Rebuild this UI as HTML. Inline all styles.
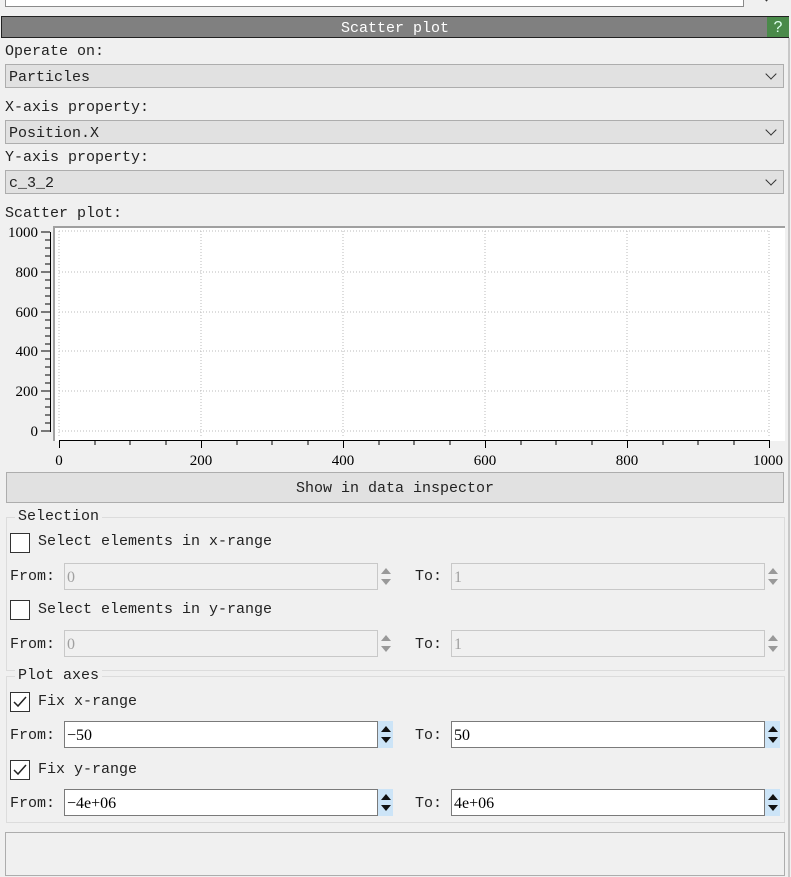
<!DOCTYPE html>
<html><head><style>
*{box-sizing:border-box;margin:0;padding:0}
body{width:791px;height:877px;background:#f0f0f0;position:relative;overflow:hidden;font-family:"Liberation Mono","Noto Sans CJK SC",monospace;font-size:15px;color:#222}
.a{position:absolute;white-space:nowrap}
.t{line-height:22px}
.combo{position:absolute;left:5px;width:779px;height:24px;background:#e1e1e1;border:1px solid #adadad;padding-left:3px;line-height:25px}
.chev{position:absolute;right:8px;top:5px;width:8px;height:8px;border-right:1.3px solid #333;border-bottom:1.3px solid #333;transform:rotate(45deg)}
.lbl{position:absolute;left:5px;line-height:22px}
.field{position:absolute;height:27px;border:1px solid #7a7a7a;background:#fff;font-family:"Liberation Serif",serif;font-size:16px;line-height:27px;padding-left:2px;color:#000}
.field.dis{background:#f0f0f0;border-color:#c8c8c8;color:#a0a0a0}
.spin{position:absolute;width:15px;height:27px;background:#cce4f7}
.spin.dis{background:transparent}
.up,.dn{position:absolute;left:3px;width:0;height:0;border-left:5px solid transparent;border-right:5px solid transparent}
.up{top:5px;border-bottom:6px solid #111}.dn{top:16px;border-top:6px solid #111}
.dis .up{border-bottom-color:#999}.dis .dn{border-top-color:#999}
.cb{position:absolute;left:10px;width:20px;height:20px;border:1px solid #333;background:#fff}
.grp{position:absolute;left:6px;width:779px;border:1px solid #dcdcdc}
.gt{position:absolute;left:8px;top:-12px;background:#f0f0f0;padding:0 3px;line-height:22px}
</style></head><body>
<div class="a" style="left:5px;top:-2px;width:739px;height:9px;border:1px solid #8a8a8a;background:#fff"></div>
<div class="a" style="left:763px;top:-7px;width:7px;height:7px;border-right:1.3px solid #333;border-bottom:1.3px solid #333;transform:rotate(45deg)"></div>
<div class="a" style="left:788px;top:38px;width:2px;height:839px;background:#c8c8c8"></div>
<div class="a" style="left:1px;top:16px;width:788px;height:22px;background:#808080;border:1px solid #222;color:#fff;text-align:center;line-height:23px">Scatter plot</div>
<div class="a" style="left:767px;top:17px;width:22px;height:20px;background:#4a8a4a;color:#dfe;text-align:center;line-height:21px;font-family:'Liberation Sans',sans-serif;font-size:16px">?</div>

<div class="lbl" style="top:41px">Operate on:</div>
<div class="combo" style="top:64px">Particles<div class="chev"></div></div>
<div class="lbl" style="top:97px">X-axis property:</div>
<div class="combo" style="top:120px">Position.X<div class="chev"></div></div>
<div class="lbl" style="top:147px">Y-axis property:</div>
<div class="combo" style="top:170px">c_3_2<div class="chev"></div></div>
<div class="lbl" style="top:203px">Scatter plot:</div>

<svg class="a" style="left:0;top:220px" width="791" height="250" font-family="Liberation Serif,serif" font-size="15" fill="#000">
<rect x="54" y="7" width="731" height="214" fill="#fff"/>
<path d="M54 221V7H785" stroke="#a0a0a0" stroke-width="2" fill="none"/>
<g stroke="#bbb" stroke-dasharray="1 2">
<path d="M59 11H770M59 52H770M59 92H770M59 131H770M59 171H770M59 211H770M59 11V218M201 11V218M343 11V218M485 11V218M627 11V218M769 11V218"/>
</g>
<g stroke="#000" fill="none">
<path d="M50.5 12V212"/>
<path d="M41 12H50M41 52H50M41 92H50M41 131H50M41 171H50M41 211H50"/>
<path d="M45 20H50M45 28H50M45 36H50M45 44H50M45 60H50M45 68H50M45 76H50M45 84H50M45 100H50M45 108H50M45 116H50M45 124H50M45 139H50M45 147H50M45 155H50M45 163H50M45 179H50M45 187H50M45 195H50M45 203H50"/>
<path d="M59 220.5H770"/>
<path d="M59.5 220V228M201.5 220V228M343.5 220V228M485.5 220V228M627.5 220V228M769.5 220V228"/>
<path d="M95 221V225M130 221V225M166 221V225M237 221V225M272 221V225M308 221V225M379 221V225M414 221V225M450 221V225M521 221V225M556 221V225M592 221V225M663 221V225M698 221V225M734 221V225"/>
</g>
<g text-anchor="end"><text x="38" y="17">1000</text><text x="38" y="57">800</text><text x="38" y="97">600</text><text x="38" y="136">400</text><text x="38" y="176">200</text><text x="38" y="216">0</text></g>
<g text-anchor="middle"><text x="59" y="245">0</text><text x="201" y="245">200</text><text x="343" y="245">400</text><text x="485" y="245">600</text><text x="627" y="245">800</text><text x="768" y="245">1000</text></g>
</svg>

<div class="a" style="left:6px;top:472px;width:778px;height:31px;background:#e1e1e1;border:1px solid #adadad;text-align:center;line-height:31px">Show in data inspector</div>

<div class="grp" style="top:517px;height:154px"><div class="gt">Selection</div></div>
<div class="cb" style="top:533px"></div><div class="a t" style="left:38px;top:531px">Select elements in x-range</div>
<div class="a t" style="left:10px;top:566px">From:</div>
<div class="field dis" style="left:64px;top:563px;width:314px">0</div>
<div class="spin dis" style="left:378px;top:563px"><div class="up"></div><div class="dn"></div></div>
<div class="a t" style="left:415px;top:566px">To:</div>
<div class="field dis" style="left:451px;top:563px;width:314px">1</div>
<div class="spin dis" style="left:765px;top:563px"><div class="up"></div><div class="dn"></div></div>

<div class="cb" style="top:600px"></div><div class="a t" style="left:38px;top:599px">Select elements in y-range</div>
<div class="a t" style="left:10px;top:634px">From:</div>
<div class="field dis" style="left:64px;top:630px;width:314px">0</div>
<div class="spin dis" style="left:378px;top:630px"><div class="up"></div><div class="dn"></div></div>
<div class="a t" style="left:415px;top:634px">To:</div>
<div class="field dis" style="left:451px;top:630px;width:314px">1</div>
<div class="spin dis" style="left:765px;top:630px"><div class="up"></div><div class="dn"></div></div>

<div class="grp" style="top:676px;height:147px"><div class="gt">Plot axes</div></div>
<div class="cb" style="top:692px"><svg width="18" height="18"><path d="M3 9L7 13L15 4" stroke="#222" stroke-width="1.5" fill="none"/></svg></div>
<div class="a t" style="left:38px;top:691px">Fix x-range</div>
<div class="a t" style="left:10px;top:725px">From:</div>
<div class="field" style="left:64px;top:721px;width:314px">−50</div>
<div class="spin" style="left:378px;top:721px"><div class="up"></div><div class="dn"></div></div>
<div class="a t" style="left:415px;top:725px">To:</div>
<div class="field" style="left:451px;top:721px;width:314px">50</div>
<div class="spin" style="left:765px;top:721px"><div class="up"></div><div class="dn"></div></div>

<div class="cb" style="top:760px"><svg width="18" height="18"><path d="M3 9L7 13L15 4" stroke="#222" stroke-width="1.5" fill="none"/></svg></div>
<div class="a t" style="left:38px;top:759px">Fix y-range</div>
<div class="a t" style="left:10px;top:793px">From:</div>
<div class="field" style="left:64px;top:789px;width:314px">−4e+06</div>
<div class="spin" style="left:378px;top:789px"><div class="up"></div><div class="dn"></div></div>
<div class="a t" style="left:415px;top:793px">To:</div>
<div class="field" style="left:451px;top:789px;width:314px">4e+06</div>
<div class="spin" style="left:765px;top:789px"><div class="up"></div><div class="dn"></div></div>

<div class="a" style="left:5px;top:832px;width:780px;height:44px;border:1px solid #adadad;background:#f0f0f0"></div>
</body></html>
